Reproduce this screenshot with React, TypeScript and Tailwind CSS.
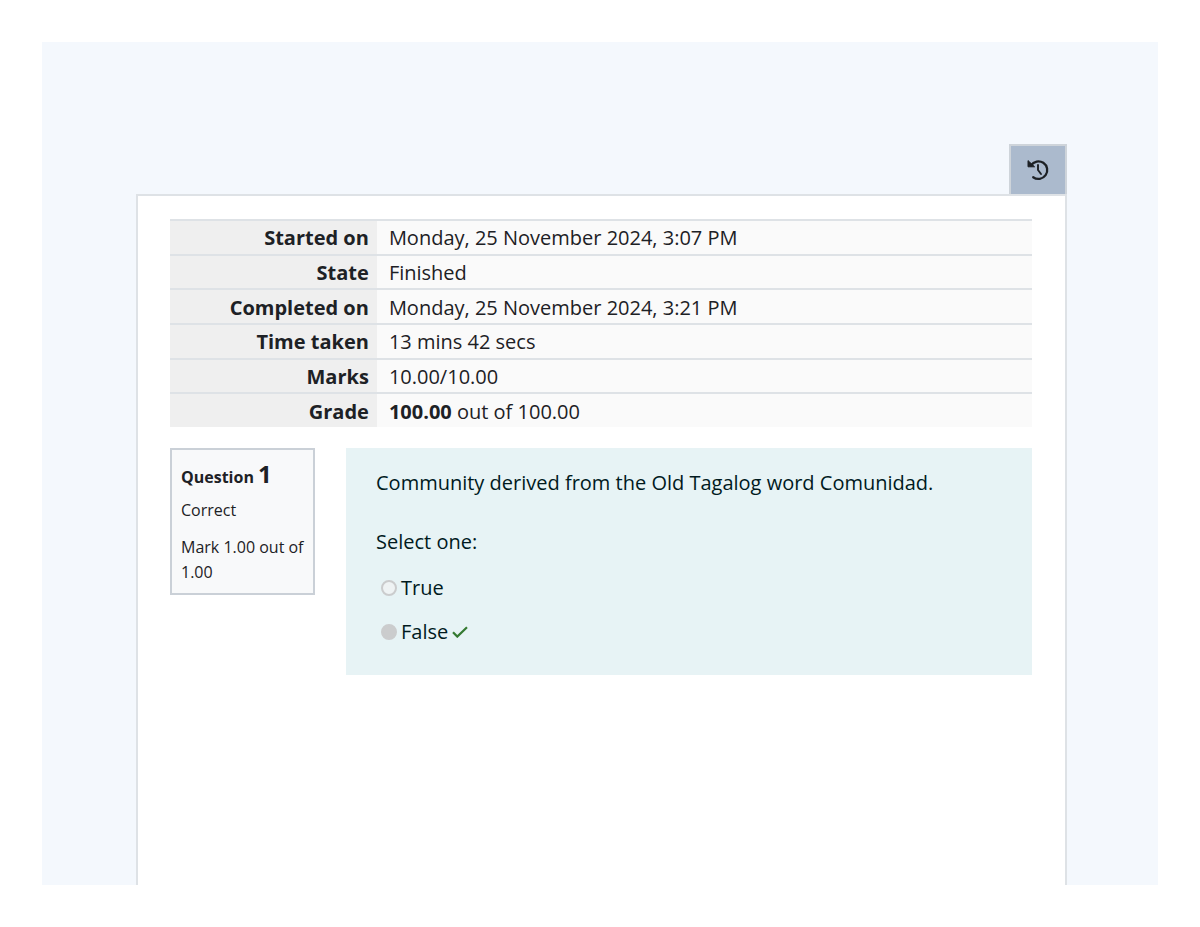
import type { ReactNode } from "react";

const rows: { label: string; value: ReactNode }[] = [
  { label: "Started on", value: "Monday, 25 November 2024, 3:07 PM" },
  { label: "State", value: "Finished" },
  { label: "Completed on", value: "Monday, 25 November 2024, 3:21 PM" },
  { label: "Time taken", value: "13 mins 42 secs" },
  { label: "Marks", value: "10.00/10.00" },
  { label: "Grade", value: <><b>100.00</b> out of 100.00</> },
];

function HistoryIcon() {
  return (
    <svg aria-hidden="true" viewBox="0 0 22 22" className="size-[22px]" fill="none" stroke="currentColor">
      <path d="M4 6.4A8.8 8.8 0 1 1 6.2 18.2" strokeWidth="2.3" strokeLinecap="round" />
      <path d="M1 1.6v6.2h6.6z" fill="currentColor" strokeWidth="1" strokeLinejoin="round" />
      <path d="M11 6v5l3 4" strokeWidth="1.9" strokeLinecap="round" strokeLinejoin="round" />
    </svg>
  );
}

function Summary() {
  return (
    <table className="h-[208px] w-full border-collapse text-xl leading-7">
      <tbody>
        {rows.map((row) => (
          <tr key={row.label} className="border-t-2 border-[#dee2e6]">
            <th scope="row" className="w-[24%] bg-[#efefef] p-0 pt-0.5 pr-2 text-right font-bold">
              {row.label}
            </th>
            <td className="bg-[#fafafa] p-0 pt-0.5 pl-3">{row.value}</td>
          </tr>
        ))}
      </tbody>
    </table>
  );
}

function QuestionInfo() {
  return (
    <aside className="w-[145px] shrink-0 border-2 border-[#cad0d7] bg-[#f8f9fa] px-[9px] pt-2 pb-2 text-base leading-[25px]">
      <h3 className="text-base leading-8 font-bold">
        Question <span className="text-2xl leading-8">1</span>
      </h3>
      <p className="mt-[5px]">Correct</p>
      <p className="mt-3">Mark 1.00 out of 1.00</p>
    </aside>
  );
}

function Option({ label, checked, correct }: { label: string; checked?: boolean; correct?: boolean }) {
  return (
    <div className="flex h-[30px] items-center">
      <label className="flex items-center gap-1">
        <input
          type="radio"
          name="answer"
          disabled
          defaultChecked={checked}
          className="size-4 appearance-none rounded-full border-2 border-[#cbcccd] bg-[#eff3f4] checked:bg-[#cbcccd]"
        />
        {label}
      </label>
      {correct && (
        <svg role="img" aria-label="Correct" viewBox="0 0 16 12" className="ml-1 h-3 w-4 text-[#357a32]">
          <path d="M1 6.2 5.3 10.6 15 1.2" fill="none" stroke="currentColor" strokeWidth="2.2" />
        </svg>
      )}
    </div>
  );
}

export default function App() {
  return (
    <div className="flex min-h-screen flex-col bg-white p-[42px] font-['Open_Sans','Noto_Sans',sans-serif] text-[#1d2125]">
      <div className="flex grow flex-col bg-[#f4f8fd] pt-[102px] pr-[91px] pl-[94px]">
        <div className="flex justify-end">
          <button
            type="button"
            aria-label="Attempt history"
            className="flex h-[50px] w-[58px] items-center justify-center border-2 border-b-0 border-[#ced4da] bg-[#abbacd]"
          >
            <HistoryIcon />
          </button>
        </div>
        <main className="grow border-2 border-b-0 border-[#dee2e6] bg-white pt-[23px] pr-[33px] pb-8 pl-8">
          <Summary />
          <section className="mt-[21px] flex items-start gap-[31px]">
            <QuestionInfo />
            <div className="grow bg-[#e7f3f5] px-[30px] pt-5 pb-7 text-xl leading-[30px] text-[#001a1e]">
              <p>Community derived from the Old Tagalog word Comunidad.</p>
              <fieldset>
                <legend className="pt-[29px]">Select one:</legend>
                <div className="mt-4 flex flex-col gap-[14px] pl-[5px]">
                  <Option label="True" />
                  <Option label="False" checked correct />
                </div>
              </fieldset>
            </div>
          </section>
        </main>
      </div>
    </div>
  );
}
